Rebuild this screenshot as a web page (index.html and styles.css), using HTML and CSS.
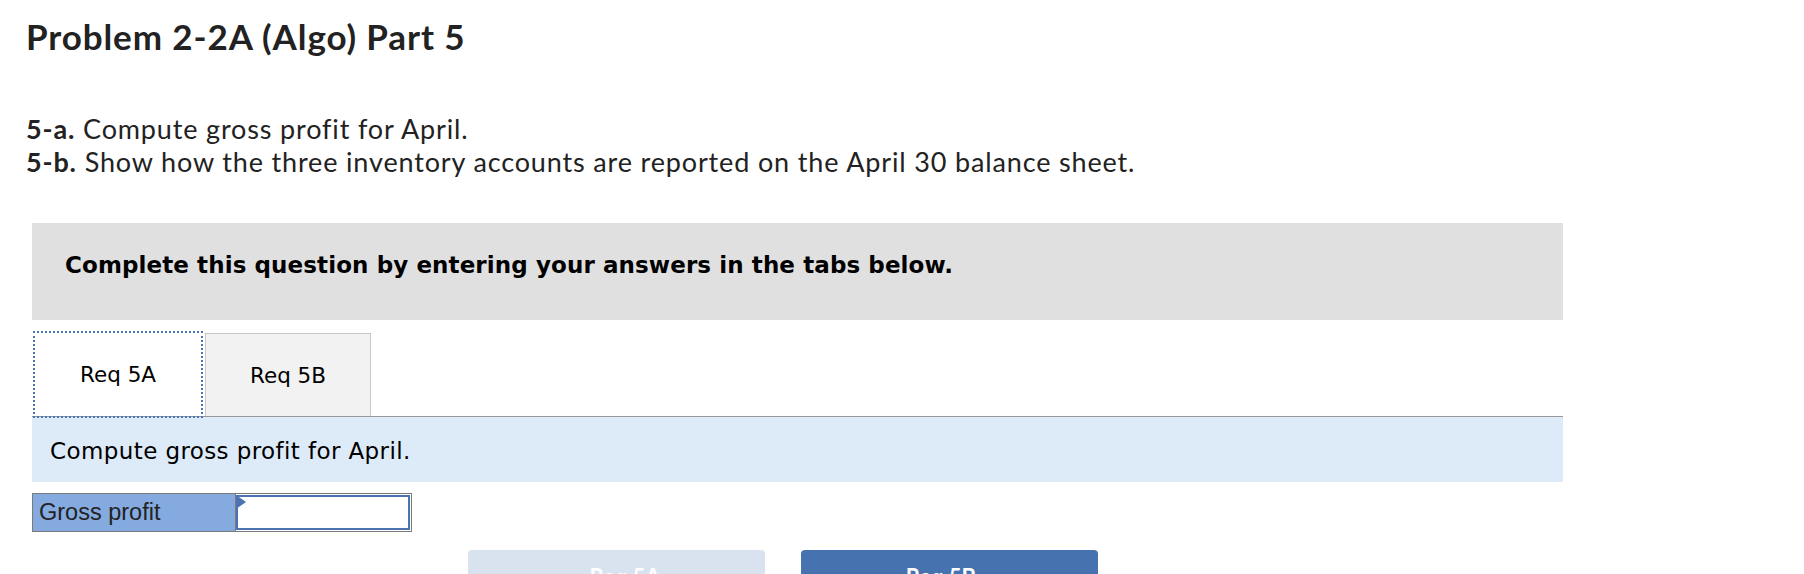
FILE: index.html
```html
<!DOCTYPE html>
<html lang="en">
<head>
<meta charset="utf-8">
<title>Problem 2-2A (Algo) Part 5</title>
<link rel="stylesheet" href="styles.css">
</head>
<body>
<div class="page">
  <h1 class="title">Problem 2-2A (Algo) Part 5</h1>
  <div class="prompt">
    <p><b>5-a.</b> Compute gross profit for April.</p>
    <p><b>5-b.</b> Show how the three inventory accounts are reported on the April 30 balance sheet.</p>
  </div>
  <div class="question">
    <div class="notice">Complete this question by entering your answers in the tabs below.</div>
    <div class="tabs">
      <div class="tab active">Req 5A</div>
      <div class="tab">Req 5B</div>
    </div>
    <div class="instruction">Compute gross profit for April.</div>
    <div class="answer">
      <div class="label">Gross profit</div>
      <div class="cell"><span class="flag"></span><div class="input"></div></div>
    </div>
    <div class="nav">
      <div class="btn prev">&#8249;&nbsp;&nbsp;Req 5A</div>
      <div class="btn next">Req 5B&nbsp;&nbsp;&#8250;</div>
    </div>
  </div>
</div>
</body>
</html>
```

FILE: styles.css
```css
html, body {
  margin: 0;
  padding: 0;
  background: #fff;
}

.page {
  padding-left: 26px;
  color: #222;
  font-family: Lato, "Open Sans", sans-serif;
}

.title {
  margin: 16px 0 0 0;
  font-size: 35px;
  line-height: 40px;
  letter-spacing: 0.9px;
  font-weight: 700;
  color: #222;
}

.prompt {
  margin-top: 56px;
  font-size: 27px;
  line-height: 33px;
  letter-spacing: 0.85px;
}

.prompt p {
  margin: 0;
}

.prompt b {
  font-weight: 700;
}

.question {
  margin-left: 6px;
  width: 1531px;
  margin-top: 45px;
}

.notice {
  background: #e0e0e0;
  height: 97px;
  box-sizing: border-box;
  padding: 28px 33px 0;
  font-family: "DejaVu Sans", Verdana, sans-serif;
  font-weight: 700;
  font-size: 23px;
  line-height: 28px;
  letter-spacing: 0.1px;
  color: #000;
}

.tabs {
  display: flex;
  margin-top: 13px;
  border-bottom: 1px solid #999;
  height: 83px;
}

.tab {
  box-sizing: border-box;
  width: 166px;
  height: 83px;
  display: flex;
  align-items: center;
  justify-content: center;
  font-family: "DejaVu Sans", Verdana, sans-serif;
  font-size: 21.5px;
  color: #000;
  background: #f2f2f2;
  border: 1px solid #c6c6c6;
  border-bottom: none;
  margin-left: 4px;
}

.tab.active {
  width: 166px;
  margin-left: 3px;
  background: #fff;
  border: none;
  outline: 2px dotted #4a74b4;
}

.instruction {
  background: #ddeaf7;
  height: 65px;
  display: flex;
  align-items: center;
  padding-left: 18px;
  padding-top: 2px;
  box-sizing: border-box;
  font-family: "DejaVu Sans", Verdana, sans-serif;
  font-size: 23px;
  letter-spacing: 0.4px;
  color: #000;
}

.answer {
  display: flex;
  margin-top: 11px;
  height: 39px;
}

.label {
  box-sizing: border-box;
  width: 204px;
  height: 39px;
  background: #84aadf;
  border: 1px solid #7a7a7a;
  padding-left: 6px;
  font-family: "Liberation Sans", Arial, sans-serif;
  font-size: 23.5px;
  line-height: 37px;
  color: #222;
}

.cell {
  position: relative;
  box-sizing: border-box;
  width: 176px;
  height: 39px;
  border: 1px solid #7a7a7a;
  border-left: none;
  padding: 1px 1px 1px 0;
  background: #fff;
}

.input {
  box-sizing: border-box;
  width: 100%;
  height: 100%;
  border: 2px solid #4b73b1;
  background: #fff;
}

.flag {
  position: absolute;
  left: 0;
  top: 1px;
  width: 0;
  height: 0;
  border-top: 7px solid transparent;
  border-bottom: 7px solid transparent;
  border-left: 10px solid #4b73b1;
}

.nav {
  display: flex;
  gap: 36px;
  margin-top: 18px;
  padding-left: 436px;
}

.btn {
  width: 297px;
  height: 52px;
  border-radius: 4px;
  display: flex;
  align-items: center;
  justify-content: center;
  color: #fff;
  font-family: Lato, "Open Sans", sans-serif;
  font-weight: 700;
  font-size: 22px;
}

.btn.prev {
  background: #d9e3ef;
}

.btn.next {
  background: #4672b0;
}
```
